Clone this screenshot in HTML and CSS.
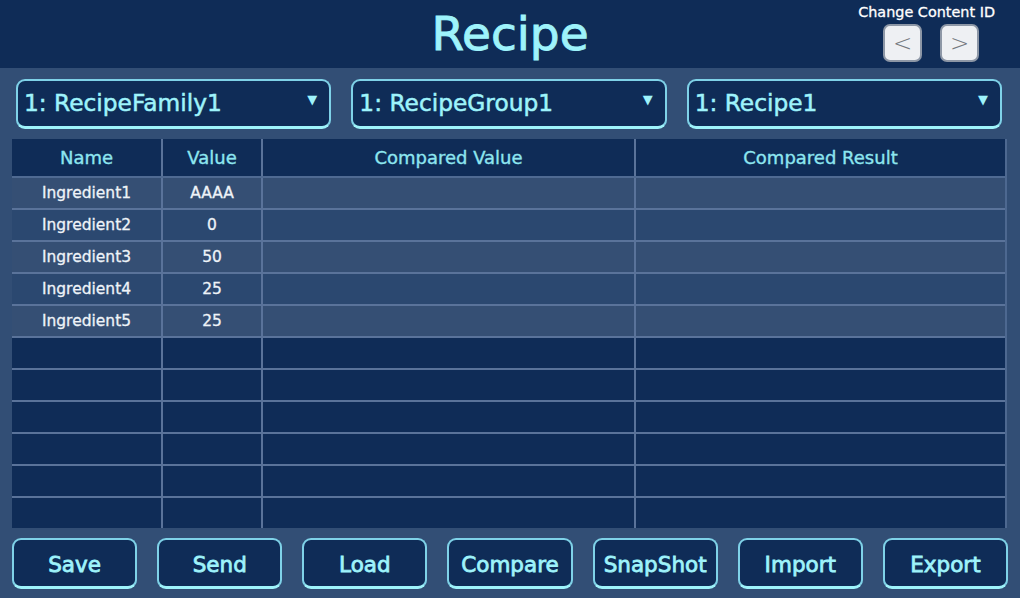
FILE: index.html
```html
<!DOCTYPE html>
<html>
<head>
<meta charset="utf-8">
<link rel="stylesheet" href="styles.css">
</head>
<body>
<div class="app">
  <header class="topbar">
    <div class="spacer"></div>
    <h1 class="title">Recipe</h1>
    <div class="content-id">
      <div class="cid-label">Change Content ID</div>
      <div class="cid-buttons">
        <button class="nav-btn">&lt;</button>
        <button class="nav-btn">&gt;</button>
      </div>
    </div>
  </header>

  <div class="selectors">
    <div class="dropdown"><span class="dd-text">1: RecipeFamily1</span><span class="dd-arrow">▼</span></div>
    <div class="dropdown"><span class="dd-text">1: RecipeGroup1</span><span class="dd-arrow">▼</span></div>
    <div class="dropdown"><span class="dd-text">1: Recipe1</span><span class="dd-arrow">▼</span></div>
  </div>

  <div class="table">
    <div class="row head">
      <div class="cell c1">Name</div>
      <div class="cell c2">Value</div>
      <div class="cell c3">Compared Value</div>
      <div class="cell c4">Compared Result</div>
    </div>
    <div class="row data odd"><div class="cell c1">Ingredient1</div><div class="cell c2">AAAA</div><div class="cell c3"></div><div class="cell c4"></div></div>
    <div class="row data even"><div class="cell c1">Ingredient2</div><div class="cell c2">0</div><div class="cell c3"></div><div class="cell c4"></div></div>
    <div class="row data odd"><div class="cell c1">Ingredient3</div><div class="cell c2">50</div><div class="cell c3"></div><div class="cell c4"></div></div>
    <div class="row data even"><div class="cell c1">Ingredient4</div><div class="cell c2">25</div><div class="cell c3"></div><div class="cell c4"></div></div>
    <div class="row data odd"><div class="cell c1">Ingredient5</div><div class="cell c2">25</div><div class="cell c3"></div><div class="cell c4"></div></div>
    <div class="row empty"><div class="cell c1"></div><div class="cell c2"></div><div class="cell c3"></div><div class="cell c4"></div></div>
    <div class="row empty"><div class="cell c1"></div><div class="cell c2"></div><div class="cell c3"></div><div class="cell c4"></div></div>
    <div class="row empty"><div class="cell c1"></div><div class="cell c2"></div><div class="cell c3"></div><div class="cell c4"></div></div>
    <div class="row empty"><div class="cell c1"></div><div class="cell c2"></div><div class="cell c3"></div><div class="cell c4"></div></div>
    <div class="row empty"><div class="cell c1"></div><div class="cell c2"></div><div class="cell c3"></div><div class="cell c4"></div></div>
    <div class="row empty"><div class="cell c1"></div><div class="cell c2"></div><div class="cell c3"></div><div class="cell c4"></div></div>
  </div>

  <div class="actions">
    <button class="act-btn">Save</button>
    <button class="act-btn">Send</button>
    <button class="act-btn">Load</button>
    <button class="act-btn">Compare</button>
    <button class="act-btn">SnapShot</button>
    <button class="act-btn">Import</button>
    <button class="act-btn">Export</button>
  </div>
</div>
</body>
</html>
```

FILE: styles.css
```css
* { box-sizing: border-box; }

html, body {
  margin: 0;
  padding: 0;
}

body {
  width: 1020px;
  height: 598px;
  overflow: hidden;
  background: #324e75;
  font-family: "DejaVu Sans", Verdana, sans-serif;
}

.app {
  width: 1020px;
  height: 598px;
  display: flex;
  flex-direction: column;
}

/* Top bar */
.topbar {
  height: 68px;
  flex: none;
  background: #0f2c57;
  display: grid;
  grid-template-columns: 1fr auto 1fr;
  align-items: start;
}

.title {
  margin: 0;
  font-size: 47px;
  font-weight: normal;
  line-height: 68px;
  color: #9ef3fb;
  -webkit-text-stroke: 0.9px #9ef3fb;
}

.content-id {
  justify-self: end;
  margin-right: 25px;
  padding-top: 3px;
  display: flex;
  flex-direction: column;
  align-items: center;
}

.cid-label {
  font-size: 14.4px;
  line-height: 18px;
  color: #ffffff;
  white-space: nowrap;
  -webkit-text-stroke: 0.3px #ffffff;
}

.cid-buttons {
  margin-top: 3px;
  margin-left: 9px;
  display: flex;
  gap: 18px;
}

.nav-btn {
  width: 39px;
  height: 38px;
  padding: 0;
  background: #eef0f3;
  border: 2px solid #8d97a6;
  border-radius: 7px;
  color: #74787e;
  font-family: "DejaVu Sans", sans-serif;
  font-size: 23px;
  font-weight: 200;
  line-height: 1;
  display: flex;
  align-items: center;
  justify-content: center;
}

/* Dropdown selectors */
.selectors {
  display: flex;
  gap: 20px;
  padding: 11px 18px 0 16px;
  flex: none;
}

.dropdown {
  flex: 1;
  height: 50px;
  background: #0f2c57;
  border: 2px solid #7fd2e8;
  border-bottom: 3px solid #9ef3fb;
  border-radius: 9px;
  display: flex;
  align-items: center;
  justify-content: space-between;
  padding: 0 12px 2px 6px;
}

.dd-text {
  font-size: 23.3px;
  color: #9ef3fb;
  white-space: nowrap;
  -webkit-text-stroke: 0.5px #9ef3fb;
}

.dd-arrow {
  font-size: 13px;
  color: #9ef3fb;
  margin-top: -6px;
}

/* Table */
.table {
  margin: 10px 13px 0 12px;
  height: 389px;
  overflow: hidden;
  flex: none;
  border-right: 2px solid #4d6890;
}

.row {
  display: grid;
  grid-template-columns: 149px 100px 373px 1fr;
  height: 32px;
}

.row.head {
  height: 39px;
  background: #0f2c57;
  border-bottom: 2px solid #4f6a92;
}

.head .cell {
  border-left: none;
  font-size: 18px;
  color: #8de6f0;
  -webkit-text-stroke: 0.35px #8de6f0;
}

.row.data,
.row.empty {
  border-bottom: 2px solid #5a739a;
}

.row.odd { background: #354f74; }
.row.even { background: #2b4870; }
.row.empty { background: #0f2c57; }

.cell {
  display: flex;
  align-items: center;
  justify-content: center;
  font-size: 15.5px;
  color: #eef3f8;
  white-space: nowrap;
  -webkit-text-stroke: 0.3px #eef3f8;
}

.cell.c2,
.cell.c3,
.cell.c4 {
  border-left: 2px solid #5a739a;
}

/* Action buttons */
.actions {
  display: flex;
  gap: 20px;
  padding: 10px 12px 0 12px;
  flex: none;
}

.act-btn {
  flex: 1;
  height: 51px;
  background: #0f2c57;
  border: 2px solid #7fd2e8;
  border-bottom: 3px solid #9ef3fb;
  border-radius: 9px;
  color: #9ef3fb;
  font-family: "DejaVu Sans", sans-serif;
  font-size: 21.5px;
  font-weight: normal;
  -webkit-text-stroke: 0.8px #9ef3fb;
  padding: 2px 0 0 0;
}
```
